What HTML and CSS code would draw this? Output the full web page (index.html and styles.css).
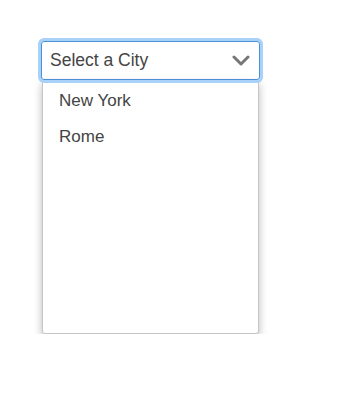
FILE: index.html
```html
<!DOCTYPE html>
<html lang="en">
<head>
    <meta charset="UTF-8">
    <title>City Select</title>
    <link rel="stylesheet" href="styles.css">
</head>
<body>
    <div class="page">
        <div class="city-select">
            <div class="select-box">
                <span class="select-label">Select a City</span>
                <svg class="chevron" width="18" height="12" viewBox="0 0 18 12">
                    <path d="M2 2 L9 9 L16 2" fill="none" stroke="#777" stroke-width="3" stroke-linecap="round" stroke-linejoin="round"/>
                </svg>
            </div>
            <ul class="options">
                <li>New York</li>
                <li>Rome</li>
            </ul>
        </div>
    </div>
</body>
</html>
```

FILE: styles.css
```css
* {
    margin: 0;
    padding: 0;
    box-sizing: border-box;
}

body {
    font-family: 'Liberation Sans', Arial, sans-serif;
    background: #fff;
    color: #444;
}

.page {
    padding: 41px 0 0 41px;
}

.city-select {
    width: 219px;
}

.select-box {
    position: relative;
    z-index: 1;
    height: 39px;
    border: 1px solid #4a90d9;
    border-radius: 3px;
    box-shadow: 0 0 0 3px #a8d2f8;
    display: flex;
    align-items: center;
    justify-content: space-between;
    padding: 0 9px 0 8px;
    font-size: 17.5px;
    color: #444;
}

.chevron {
    display: block;
}

.options {
    list-style: none;
    margin-left: 1px;
    width: 217px;
    height: 254px;
    border: 1px solid #c6c6c6;
    border-top: none;
    border-radius: 0 0 3px 3px;
    box-shadow: 0 4px 9px rgba(0, 0, 0, 0.28);
    padding-top: 3px;
}

.options li {
    font-size: 17px;
    padding: 0 16px;
    height: 36px;
    line-height: 36px;
}
```
